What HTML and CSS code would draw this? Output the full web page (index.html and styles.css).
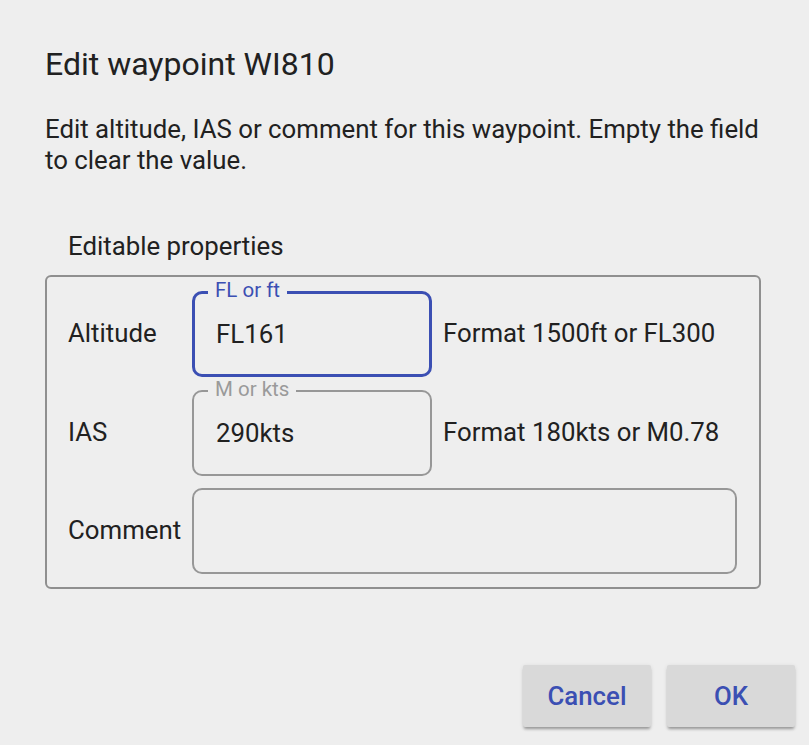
FILE: index.html
```html
<!DOCTYPE html>
<html lang="en">
<head>
<meta charset="utf-8">
<title>Edit waypoint WI810</title>
<link rel="stylesheet" href="styles.css">
</head>
<body>
<div class="dialog">
  <h1 class="title">Edit waypoint WI810</h1>
  <p class="desc">Edit altitude, IAS or comment for this waypoint. Empty the field to clear the value.</p>
  <div class="legend">Editable properties</div>
  <div class="props">
    <div class="row-label">Altitude</div>
    <div class="field focused">
      <label class="float-label" for="alt">FL or ft</label>
      <input id="alt" class="input" type="text" value="FL161">
    </div>
    <div class="help">Format 1500ft or FL300</div>

    <div class="row-label">IAS</div>
    <div class="field">
      <label class="float-label" for="ias">M or kts</label>
      <input id="ias" class="input" type="text" value="290kts">
    </div>
    <div class="help">Format 180kts or M0.78</div>

    <div class="row-label">Comment</div>
    <div class="field wide">
      <input id="comment" class="input" type="text" value="">
    </div>
  </div>
  <div class="footer">
    <button class="btn" type="button">Cancel</button>
    <button class="btn" type="button">OK</button>
  </div>
</div>
</body>
</html>
```

FILE: styles.css
```css
* { box-sizing: border-box; }

html, body {
  margin: 0;
  padding: 0;
  background: #eeeeee;
}

body {
  font-family: Roboto, "Liberation Sans", sans-serif;
  color: #212121;
  width: 809px;
  height: 745px;
  overflow: hidden;
}

.dialog {
  padding: 0 20px 0 45px;
}

.title {
  margin: 0;
  padding-top: 44.5px;
  font-size: 32px;
  line-height: 39px;
  font-weight: 400;
  color: #212121;
}

.desc {
  margin: 30.3px 0 0 0;
  max-width: 730px;
  font-size: 25.8px;
  line-height: 31.2px;
  color: #212121;
}

.legend {
  margin-top: 55px;
  padding-left: 23px;
  font-size: 25.8px;
  line-height: 31.2px;
}

.props {
  margin-top: 12.6px;
  margin-right: 28px;
  border: 2px solid #8f8f8f;
  border-radius: 6px;
  padding: 14px 22px 13px 21px;
  display: grid;
  grid-template-columns: 124px 240px 1fr;
  grid-auto-rows: 86px;
  row-gap: 12.5px;
  align-items: center;
}

.row-label {
  font-size: 25.8px;
  line-height: 31.2px;
}

.field {
  position: relative;
  height: 86px;
}

.field.wide {
  grid-column: 2 / 4;
}

.input {
  display: block;
  width: 100%;
  height: 100%;
  margin: 0;
  border: 2px solid #979797;
  border-radius: 10px;
  background: transparent;
  padding: 0 10px 0 22px;
  font-family: Roboto, "Liberation Sans", sans-serif;
  font-size: 25.8px;
  color: #212121;
  outline: none;
}

.field.focused .input {
  border: 3px solid #3b4fb3;
  padding-left: 21px;
}

.float-label {
  position: absolute;
  top: -11px;
  left: 16px;
  padding: 0 7px;
  background: #eeeeee;
  font-size: 20.5px;
  line-height: 21px;
  color: #9a9a9a;
}

.field.focused .float-label {
  color: #3b4fb3;
}

.help {
  padding-left: 11px;
  font-size: 25.8px;
  line-height: 31.2px;
  white-space: nowrap;
}

.footer {
  margin-top: 76px;
  display: flex;
  justify-content: flex-end;
  gap: 16px;
  margin-right: -6px;
}

.btn {
  width: 128px;
  height: 62px;
  border: none;
  border-radius: 2px;
  background: #d9d9d9;
  color: #3b4fb3;
  font-family: Roboto, "Liberation Sans", sans-serif;
  font-size: 25.8px;
  font-weight: 500;
  box-shadow: 0 3px 3px -1px rgba(0,0,0,0.32), 0 1px 4px rgba(0,0,0,0.10);
  padding: 0;
  cursor: pointer;
}
```
